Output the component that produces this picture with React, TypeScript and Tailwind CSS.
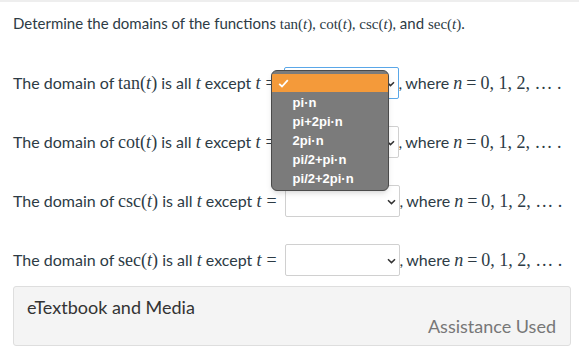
import React from "react";

const M = ({ children, s = "text-[18px]" }: { children: React.ReactNode; s?: string }) => (
  <span className={s} style={{ fontFamily: '"Liberation Serif", serif' }}>
    {children}
  </span>
);
const I = ({ children }: { children: React.ReactNode }) => <i>{children}</i>;
const Eq = ({ m = "mx-[5px]" }: { m?: string }) => <span className={"inline-block " + m}>=</span>;

const Chevron = () => (
  <svg width="9" height="6" viewBox="0 0 9 6" className="absolute right-[3px] top-[13px]">
    <path d="M1 1.2 L4.5 4.6 L8 1.2" fill="none" stroke="#333" strokeWidth="1.5" />
  </svg>
);

function Row({ fn, focused, menu }: { fn: string; focused?: boolean; menu?: boolean }) {
  return (
    <div className="flex items-center h-[32px] text-[16px]">
      <span className="whitespace-nowrap">
        The domain of <M>{fn}(<I>t</I>)</M> is all <M><I>t</I></M> except{" "}
        <M>
          <I>t</I>
          <Eq />
        </M>
      </span>
      <div className="relative ml-[3px]">
        <div
          className={
            "relative w-[115px] h-[32px] rounded-[2px] bg-white border " +
            (focused ? "border-[#5aa7e8]" : "border-[#d0d0d0]")
          }
        >
          <Chevron />
        </div>
        {menu && (
          <div className="absolute left-[-13px] top-[3px] w-[118px] h-[121px] rounded-[6px] bg-[#7b7b7b] border border-[#4a4a4a] shadow-md overflow-hidden pt-[3px] z-10">
            <div className="h-[18px] bg-[#f49a3a] flex items-center pl-[6px]">
              <svg width="11" height="9" viewBox="0 0 11 9">
                <path d="M1.2 4.8 L4 7.5 L9.8 1.2" fill="none" stroke="white" strokeWidth="1.8" />
              </svg>
            </div>
            <div
              className="pl-[21px] text-white font-bold text-[13px] leading-[19px] pt-[1px]"
              style={{ fontFamily: '"Liberation Sans", Arial, sans-serif' }}
            >
              <div>pi·n</div>
              <div>pi+2pi·n</div>
              <div>2pi·n</div>
              <div>pi/2+pi·n</div>
              <div>pi/2+2pi·n</div>
            </div>
          </div>
        )}
      </div>
      <span className="whitespace-nowrap">
        ,<span className="inline-block w-[3px]" />where{" "}
        <M>
          <I>n</I>
          <Eq m="mx-[4px]" />
          0, 1, 2, … .
        </M>
      </span>
    </div>
  );
}

export default function App() {
  return (
    <div
      className="w-[579px] h-[352px] bg-white text-[#2d3b45] text-[15px] border-t-2 border-[#eeeeee] overflow-hidden"
      style={{ fontFamily: 'Lato, "Noto Sans", sans-serif' }}
    >
      <div className="px-[13px]">
        <div className="pt-[10px] h-[38px] whitespace-nowrap text-[15px]">
          Determine the domains of the functions <M s="text-[15px]">tan(<I>t</I>)</M>,{" "}
          <M s="text-[15px]">cot(<I>t</I>)</M>, <M s="text-[15px]">csc(<I>t</I>)</M>, and{" "}
          <M s="text-[15px]">sec(<I>t</I>)</M>.
        </div>
        <div className="flex flex-col gap-[27px] mt-[27px]">
          <Row fn="tan" focused menu />
          <Row fn="cot" />
          <Row fn="csc" />
          <Row fn="sec" />
        </div>
        <div className="mt-[10px] h-[60px] w-[558px] rounded-[3px] bg-[#f4f4f4] border border-[#dedede] px-[13px] pt-[9px] flex flex-col">
          <div className="text-[18px] leading-[22px] text-[#333]">eTextbook and Media</div>
          <div className="self-end text-[18px] text-[#777] leading-[20px] mt-[-2px] mr-[1px]">Assistance Used</div>
        </div>
      </div>
    </div>
  );
}
